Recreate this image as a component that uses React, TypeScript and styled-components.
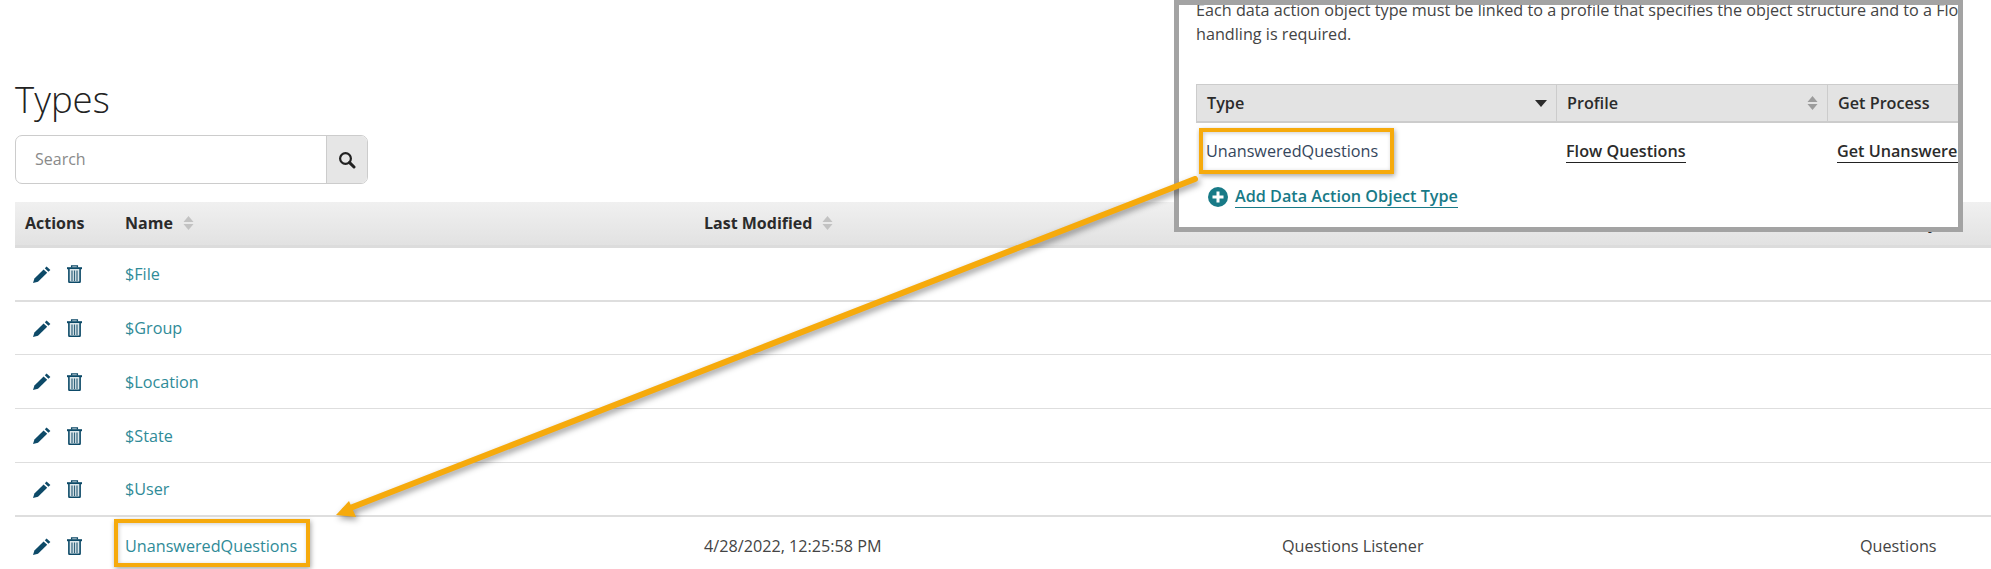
import React from "react";
import styled, { createGlobalStyle } from "styled-components";

const rows = [
  { name: "$File" },
  { name: "$Group" },
  { name: "$Location" },
  { name: "$State" },
  { name: "$User" },
  {
    name: "UnansweredQuestions",
    modified: "4/28/2022, 12:25:58 PM",
    description: "Questions Listener",
    category: "Questions",
    marked: true,
  },
];

const GlobalStyle = createGlobalStyle`
  html, body {
    margin: 0;
    height: 100%;
    overflow: hidden;
    background: #fff;
  }
  body {
    font-family: "Open Sans", "Liberation Sans", sans-serif;
    color: #333;
  }
`;

const Page = styled.div`
  position: relative;
  width: 1991px;
  height: 569px;
  overflow: hidden;
  padding: 76px 0 0 15px;
  box-sizing: border-box;
`;

const Title = styled.h1`
  margin: 0;
  font-size: 36.5px;
  line-height: 46px;
  font-weight: 300;
  color: #222;
`;

const SearchBar = styled.div`
  display: flex;
  width: 353px;
  height: 49px;
  margin-top: 13px;
  box-sizing: border-box;
  border: 1px solid #ccc;
  border-radius: 7px;
  overflow: hidden;
`;

const SearchField = styled.div`
  flex: 1;
  display: flex;
  align-items: center;
  padding: 0 0 2px 19px;
  font-size: 16px;
  color: #8a8a8a;
`;

const SearchButton = styled.div`
  width: 40px;
  display: flex;
  align-items: center;
  justify-content: center;
  background: #e6e6e6;
  border-left: 1px solid #ccc;
`;

const Table = styled.div`
  margin-top: 18px;
`;

const columns = "100px 579px 578px 578px 1fr";

const HeaderRow = styled.div`
  display: grid;
  grid-template-columns: ${columns};
  align-items: center;
  height: 46px;
  padding-bottom: 2px;
  box-sizing: border-box;
  background: linear-gradient(#f0f0f0, #e2e2e2);
  border-bottom: 3px solid #dcdcdc;
`;

const HeaderCell = styled.div`
  display: flex;
  align-items: center;
  gap: 10px;
  padding-left: 10px;
  font-size: 16px;
  font-weight: 700;
  color: #2b2b2b;
`;

const Row = styled.div<{ $height: number; $thick?: boolean }>`
  display: grid;
  grid-template-columns: ${columns};
  align-items: center;
  height: ${(p) => p.$height}px;
  box-sizing: border-box;
  border-bottom: ${(p) => (p.$thick ? 2 : 1)}px solid #dedede;
  font-size: 16.2px;
  color: #444;

  &:last-child {
    border-bottom: 0;
    padding-top: 4px;
  }
`;

const Cell = styled.div`
  padding-left: 10px;
`;

const Actions = styled.div`
  display: flex;
  align-items: center;
  gap: 16px;
  padding-left: 18px;
`;

const TypeLink = styled.span`
  position: relative;
  display: inline-block;
  line-height: 22px;
  color: #2f8b98;
`;

const Highlight = styled.span<{ $top: number; $right: number; $bottom: number; $left: number }>`
  position: absolute;
  top: ${(p) => p.$top}px;
  right: ${(p) => p.$right}px;
  bottom: ${(p) => p.$bottom}px;
  left: ${(p) => p.$left}px;
  border: 4px solid #f6aa0c;
  box-shadow: 1px 2px 5px rgba(0, 0, 0, 0.35), inset 1px 1px 4px rgba(0, 0, 0, 0.2);
`;

const SortMark = styled.svg<{ $dark?: boolean }>`
  width: 11px;
  height: 14px;
  fill: ${(p) => (p.$dark ? "#9c9c9c" : "#c2c2c2")};
`;

const Inset = styled.div`
  position: absolute;
  top: 0;
  left: 1174px;
  width: 789px;
  height: 232px;
  box-sizing: border-box;
  border: 5px solid #a3a3a3;
  background: #fff;
  padding-left: 17px;
  overflow: hidden;
`;

const InsetBody = styled.div`
  width: 762px;
  overflow: hidden;
  height: 240px;
`;

const InsetText = styled.p`
  margin: -7px 0 38px;
  width: 800px;
  font-size: 16.2px;
  line-height: 24px;
  color: #444;
  white-space: nowrap;
`;

const insetColumns = "360px 271px 300px";

const InsetHeader = styled.div`
  display: grid;
  grid-template-columns: ${insetColumns};
  height: 39px;
  box-sizing: border-box;
  background: #e3e3e3;
  border: 1px solid #ccc;
  border-width: 1px 0 2px 1px;
`;

const InsetHeaderCell = styled.div`
  display: flex;
  align-items: center;
  justify-content: space-between;
  padding: 0 9px 0 10px;
  font-size: 16.2px;
  font-weight: 600;
  color: #2b2b2b;
  border-right: 1px solid #ccc;
`;

const InsetRow = styled.div`
  display: grid;
  grid-template-columns: ${insetColumns};
  align-items: center;
  height: 56px;
  font-size: 16.2px;
`;

const InsetCell = styled.div`
  padding-left: 10px;
  white-space: nowrap;
`;

const PlainType = styled(TypeLink)`
  color: #35465c;
`;

const BoundLink = styled.span`
  display: inline-block;
  font-weight: 600;
  line-height: 22px;
  color: #2b2b2b;
  border-bottom: 1px solid #222;
`;

const AddRow = styled.div`
  display: flex;
  align-items: center;
  gap: 7px;
  margin: 6px 0 0 12px;
`;

const AddLink = styled(BoundLink)`
  font-size: 16.2px;
  color: #187a87;
  border-bottom-color: #187a87;
`;

const ArrowLayer = styled.svg`
  position: absolute;
  top: 0;
  left: 0;
  width: 1991px;
  height: 569px;
  pointer-events: none;
  filter: drop-shadow(2px 3px 3px rgba(0, 0, 0, 0.4));
`;

const SearchIcon = () => (
  <svg width="18" height="18" viewBox="0 0 18 18" fill="none" stroke="#222">
    <circle cx="7.5" cy="7.5" r="5.4" strokeWidth="2.2" />
    <path d="M11.6 11.6 16 16" strokeWidth="3" strokeLinecap="round" />
  </svg>
);

const PencilIcon = () => (
  <svg width="18" height="17" viewBox="0 0 18 17" fill="#0d4a68">
    <path d="M0 17 1.4 12.4 10.6 3.4 14.2 6.8 5 15.8Z" />
    <path d="M11.8 2.2 13.6 .4 17.4 4 15.4 5.8Z" />
  </svg>
);

const TrashIcon = () => (
  <svg width="15" height="18" viewBox="0 0 15 18" fill="none" stroke="#0d4a68">
    <path d="M0 3.2h15" strokeWidth="2" />
    <path d="M4.6 2.6V.8h5.8v1.8" strokeWidth="1.3" />
    <path d="M1.9 4v12.6c0 .4.3.7.7.7h9.8c.4 0 .7-.3.7-.7V4" strokeWidth="1.6" fill="#dce6ea" />
    <path d="M5 5.5v10.5M7.5 5.5v10.5M10 5.5v10.5" strokeWidth="1.2" stroke="#30637c" />
  </svg>
);

const SortBoth = ({ dark }: { dark?: boolean }) => (
  <SortMark viewBox="0 0 11 14" $dark={dark}>
    <path d="M5.5 0 10.5 6H.5Z" />
    <path d="M5.5 14 .5 8h10Z" />
  </SortMark>
);

const SortDown = () => (
  <svg width="12" height="7" viewBox="0 0 12 7" fill="#2b2b2b">
    <path d="M0 0h12L6 7Z" />
  </svg>
);

const PlusBadge = () => (
  <svg width="20" height="20" viewBox="0 0 20 20">
    <circle cx="10" cy="10" r="10" fill="#187a87" />
    <path d="M10 4.5v11M4.5 10h11" stroke="#fff" strokeWidth="3" />
  </svg>
);

const App = () => {
  return (
    <Page>
      <GlobalStyle />
      <Title>Types</Title>
      <SearchBar>
        <SearchField>Search</SearchField>
        <SearchButton>
          <SearchIcon />
        </SearchButton>
      </SearchBar>
      <Table>
        <HeaderRow>
          <HeaderCell>Actions</HeaderCell>
          <HeaderCell>
            Name <SortBoth />
          </HeaderCell>
          <HeaderCell>
            Last Modified <SortBoth />
          </HeaderCell>
          <HeaderCell />
          <HeaderCell>Summary</HeaderCell>
        </HeaderRow>
        {rows.map((row, i) => (
          <Row key={row.name} $height={i === 1 ? 53 : 54} $thick={i === 0 || i === 4}>
            <Actions>
              <PencilIcon />
              <TrashIcon />
            </Actions>
            <Cell>
              <TypeLink>
                {row.name}
                {row.marked && <Highlight $top={-16} $right={-13} $bottom={-10} $left={-11} />}
              </TypeLink>
            </Cell>
            <Cell>{row.modified}</Cell>
            <Cell>{row.description}</Cell>
            <Cell>{row.category}</Cell>
          </Row>
        ))}
      </Table>

      <Inset>
        <InsetBody>
          <InsetText>
            Each data action object type must be linked to a profile that specifies the object
            structure and to a Flow
            <br />
            handling is required.
          </InsetText>
          <InsetHeader>
            <InsetHeaderCell>
              Type <SortDown />
            </InsetHeaderCell>
            <InsetHeaderCell>
              Profile <SortBoth dark />
            </InsetHeaderCell>
            <InsetHeaderCell>Get Process</InsetHeaderCell>
          </InsetHeader>
          <InsetRow>
            <InsetCell>
              <PlainType>
                UnansweredQuestions
                <Highlight $top={-12} $right={-16} $bottom={-12} $left={-7} />
              </PlainType>
            </InsetCell>
            <InsetCell>
              <BoundLink>Flow Questions</BoundLink>
            </InsetCell>
            <InsetCell>
              <BoundLink>Get Unanswered Questions</BoundLink>
            </InsetCell>
          </InsetRow>
          <AddRow>
            <PlusBadge />
            <AddLink>Add Data Action Object Type</AddLink>
          </AddRow>
        </InsetBody>
      </Inset>

      <ArrowLayer viewBox="0 0 1991 569">
        <path d="M1195 179 345 510" stroke="#f6aa0c" strokeWidth="6" strokeLinecap="round" fill="none" />
        <path d="M336 515 349 501 356 517Z" fill="#f6aa0c" />
      </ArrowLayer>
    </Page>
  );
};

export default App;
